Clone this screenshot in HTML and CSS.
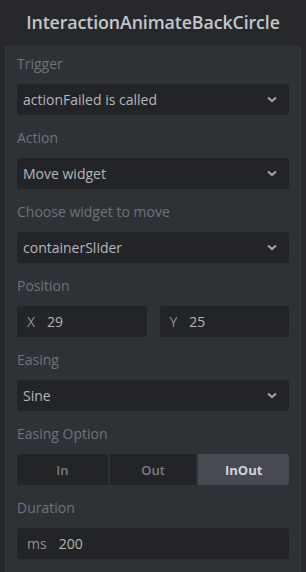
FILE: index.html
```html
<!DOCTYPE html>
<html lang="en">
<head>
  <meta charset="UTF-8">
  <title>InteractionAnimateBackCircle</title>
  <link rel="stylesheet" href="styles.css">
</head>
<body>
  <div class="header">InteractionAnimateBackCircle</div>

  <div class="panel">
    <div class="label">Trigger</div>
    <div class="field select">
      <span>actionFailed is called</span>
      <svg class="chevron" viewBox="0 0 10 6"><path d="M1 1 L5 4.5 L9 1"/></svg>
    </div>

    <div class="label">Action</div>
    <div class="field select">
      <span>Move widget</span>
      <svg class="chevron" viewBox="0 0 10 6"><path d="M1 1 L5 4.5 L9 1"/></svg>
    </div>

    <div class="label">Choose widget to move</div>
    <div class="field select">
      <span>containerSlider</span>
      <svg class="chevron" viewBox="0 0 10 6"><path d="M1 1 L5 4.5 L9 1"/></svg>
    </div>

    <div class="label">Position</div>
    <div class="pair">
      <div class="field"><span class="unit">X</span><span>29</span></div>
      <div class="field"><span class="unit">Y</span><span>25</span></div>
    </div>

    <div class="label">Easing</div>
    <div class="field select">
      <span>Sine</span>
      <svg class="chevron" viewBox="0 0 10 6"><path d="M1 1 L5 4.5 L9 1"/></svg>
    </div>

    <div class="label">Easing Option</div>
    <div class="segments">
      <div class="seg">In</div>
      <div class="seg seg--mid">Out</div>
      <div class="seg active">InOut</div>
    </div>

    <div class="label">Duration</div>
    <div class="field"><span class="unit">ms</span><span>200</span></div>
  </div>
</body>
</html>
```

FILE: styles.css
```css
html, body {
  margin: 0;
  height: 100%;
}

body {
  display: flex;
  flex-direction: column;
  background: #26282c;
  font-family: 'Open Sans', 'Noto Sans', sans-serif;
  color: #b4b7bb;
  overflow: hidden;
}

.header {
  height: 48px;
  line-height: 44px;
  text-align: center;
  font-size: 17.8px;
  font-weight: 600;
  color: #c3c6ca;
  letter-spacing: -0.1px;
}

.panel {
  flex: 1;
  margin: 0 5px;
  padding: 7px 11px 0 11px;
  background: #2e3136;
  border: 1px solid #33363b;
  border-bottom: none;
}

.label {
  font-size: 14px;
  color: #6f737a;
  height: 20px;
  line-height: 20px;
  margin-bottom: 10px;
}

.field {
  display: flex;
  align-items: center;
  height: 31px;
  padding: 0 6px;
  margin-bottom: 13px;
  background: #222428;
  border-radius: 3px;
  font-size: 14px;
  color: #b4b7bb;
  box-sizing: border-box;
}

.select span {
  flex: 1;
}

.chevron {
  width: 10px;
  height: 7px;
  margin-right: 6px;
  fill: none;
  stroke: #a0a3a8;
  stroke-width: 2.2;
}

.unit {
  margin: 0 12px 0 4px;
  color: #8e9197;
}

.pair {
  display: flex;
  gap: 13px;
}

.pair .field {
  flex: 1;
}

.segments {
  display: flex;
  gap: 2.5px;
  height: 31px;
  margin-bottom: 13px;
}

.seg {
  flex: 91;
  display: flex;
  align-items: center;
  justify-content: center;
  background: #222428;
  font-size: 13px;
  font-weight: 600;
  color: #7a7e85;
}

.seg--mid {
  flex: 86;
}

.seg:first-child {
  border-radius: 3px 0 0 3px;
}

.seg:last-child {
  border-radius: 0 3px 3px 0;
}

.seg.active {
  background: #474a50;
  color: #d2d4d7;
  font-weight: 700;
}
```
